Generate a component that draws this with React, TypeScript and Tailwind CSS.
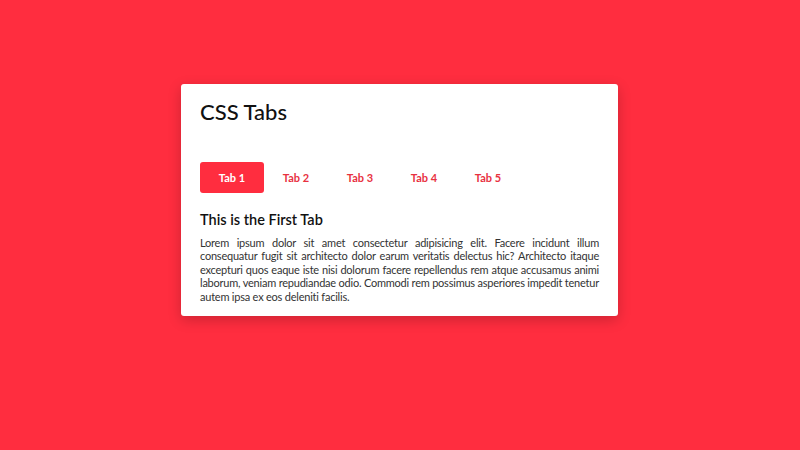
import { useState } from 'react'

const tabs = [
  {
    label: 'Tab 1',
    title: 'This is the First Tab',
    body: 'Lorem ipsum dolor sit amet consectetur adipisicing elit. Facere incidunt illum consequatur fugit sit architecto dolor earum veritatis delectus hic? Architecto itaque excepturi quos eaque iste nisi dolorum facere repellendus rem atque accusamus animi laborum, veniam repudiandae odio. Commodi rem possimus asperiores impedit tenetur autem ipsa ex eos deleniti facilis.',
  },
  { label: 'Tab 2', title: 'This is the Second Tab', body: 'Lorem ipsum dolor sit amet consectetur adipisicing elit.' },
  { label: 'Tab 3', title: 'This is the Third Tab', body: 'Lorem ipsum dolor sit amet consectetur adipisicing elit.' },
  { label: 'Tab 4', title: 'This is the Fourth Tab', body: 'Lorem ipsum dolor sit amet consectetur adipisicing elit.' },
  { label: 'Tab 5', title: 'This is the Fifth Tab', body: 'Lorem ipsum dolor sit amet consectetur adipisicing elit.' },
]

export default function App() {
  const [active, setActive] = useState(0)
  const current = tabs[active]

  return (
    <div
      className="flex h-[450px] w-[800px] justify-center bg-[#ff2d3f] pt-[84px]"
      style={{ fontFamily: 'Lato, "Open Sans", sans-serif' }}
    >
      <div className="mr-[1px] h-fit w-[437px] rounded-[3px] bg-white px-[19px] pt-[14px] pb-[13px] shadow-[0_4px_14px_rgba(0,0,0,0.2)]">
        <h1 className="text-[22px] leading-[28px] font-medium text-[#111]">CSS Tabs</h1>

        {/* Tab strip */}
        <div className="mt-[36px] flex">
          {tabs.map((tab, i) => (
            <button
              key={tab.label}
              onClick={() => setActive(i)}
              className={`h-[31px] w-[64px] rounded-[3px] pt-[2px] text-[11px] font-bold ${
                i === active ? 'bg-[#ff2d3f] text-white' : 'text-[#e8323f]'
              }`}
            >
              {tab.label}
            </button>
          ))}
        </div>

        <h2 className="mt-[17px] text-[14.5px] leading-[20px] font-semibold text-[#111]">{current.title}</h2>
        <p className="mt-[6px] text-justify text-[11px] leading-[13.4px] tracking-[-0.22px] text-[#333]">{current.body}</p>
      </div>
    </div>
  )
}
